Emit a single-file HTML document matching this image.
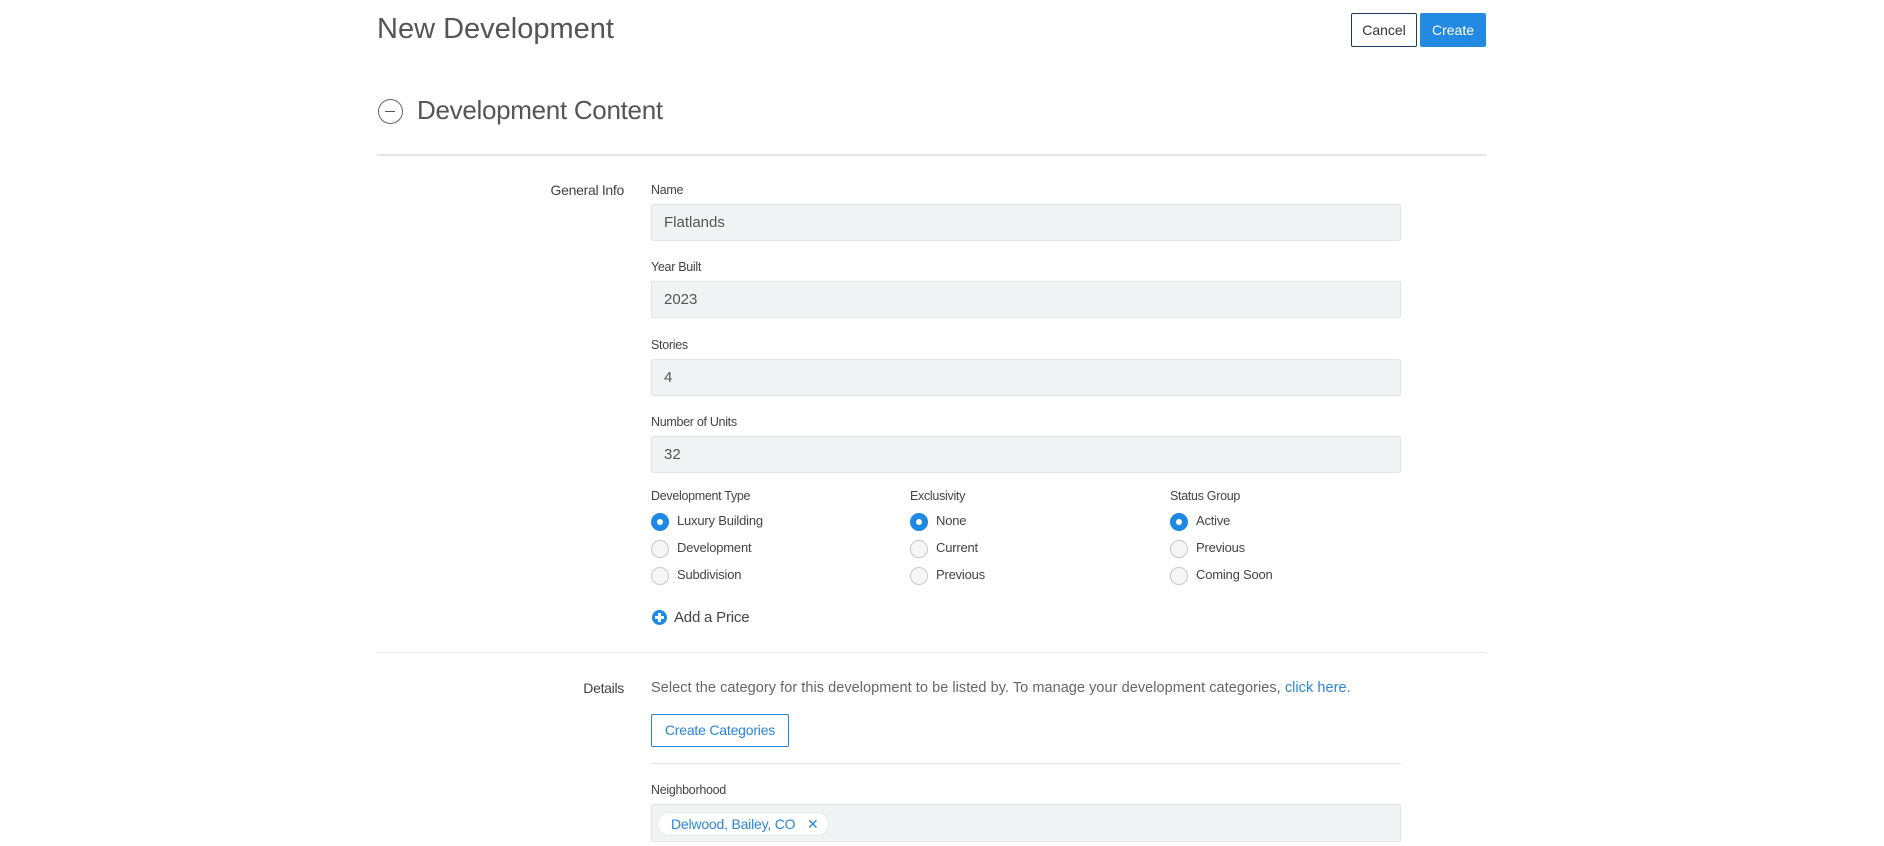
<!DOCTYPE html>
<html><head><style>
*{box-sizing:border-box;margin:0;padding:0}
body{width:1884px;height:846px;background:#fff;font-family:"Liberation Sans",sans-serif;color:#555;position:relative;overflow:hidden}
.a{position:absolute;white-space:nowrap}
.lbl{font-size:12.5px;color:#444;letter-spacing:-0.3px}
.inp{position:absolute;left:651px;width:750px;height:37px;background:#f2f3f4;border:1px solid #e3e4e6;border-radius:2px;font-size:15px;color:#555;padding:9px 0 0 12px}
.r{position:absolute;width:18px;height:18px;border-radius:50%;border:1px solid #c8c8c8;background:#f6f6f6}
.r.on{background:#1e88e5;border-color:#1e88e5}
.r.on:after{content:"";position:absolute;left:5px;top:5px;width:6px;height:6px;border-radius:50%;background:#fff}
.rt{font-size:13px;color:#444;letter-spacing:-0.2px}
</style></head><body>
<div class="a" style="left:377px;top:13px;font-size:29px;color:#555">New Development</div>
<div class="a" style="left:1351px;top:13px;width:66px;height:34px;border:1px solid #1f3a5f;border-radius:2px;font-size:14px;color:#333;text-align:center;line-height:32px">Cancel</div>
<div class="a" style="left:1420px;top:13px;width:66px;height:34px;background:#238ae3;border-radius:2px;font-size:14px;color:#fff;text-align:center;line-height:34px">Create</div>
<div class="a" style="left:378px;top:99px;width:25px;height:25px;border:1.5px solid #666;border-radius:50%"><div style="position:absolute;left:6px;top:10.5px;width:10px;height:1.5px;background:#555"></div></div>
<div class="a" style="left:417px;top:95px;font-size:26px;color:#555;letter-spacing:-0.3px">Development Content</div>
<div class="a" style="left:377px;top:154px;width:1109px;height:2px;background:#e6e6e6"></div>
<div class="a" style="left:524px;width:100px;text-align:right;top:182px;font-size:14px;color:#444;letter-spacing:-0.3px">General Info</div>
<div class="a lbl" style="left:651px;top:183px">Name</div>
<div class="inp" style="top:204px">Flatlands</div>
<div class="a lbl" style="left:651px;top:260px">Year Built</div>
<div class="inp" style="top:281px">2023</div>
<div class="a lbl" style="left:651px;top:338px">Stories</div>
<div class="inp" style="top:359px">4</div>
<div class="a lbl" style="left:651px;top:415px">Number of Units</div>
<div class="inp" style="top:436px">32</div>

<div class="a lbl" style="left:651px;top:489px">Development Type</div>
<div class="r on" style="left:651px;top:513px"></div><div class="a rt" style="left:677px;top:513px">Luxury Building</div>
<div class="r" style="left:651px;top:540px"></div><div class="a rt" style="left:677px;top:540px">Development</div>
<div class="r" style="left:651px;top:567px"></div><div class="a rt" style="left:677px;top:567px">Subdivision</div>

<div class="a lbl" style="left:910px;top:489px">Exclusivity</div>
<div class="r on" style="left:910px;top:513px"></div><div class="a rt" style="left:936px;top:513px">None</div>
<div class="r" style="left:910px;top:540px"></div><div class="a rt" style="left:936px;top:540px">Current</div>
<div class="r" style="left:910px;top:567px"></div><div class="a rt" style="left:936px;top:567px">Previous</div>

<div class="a lbl" style="left:1170px;top:489px">Status Group</div>
<div class="r on" style="left:1170px;top:513px"></div><div class="a rt" style="left:1196px;top:513px">Active</div>
<div class="r" style="left:1170px;top:540px"></div><div class="a rt" style="left:1196px;top:540px">Previous</div>
<div class="r" style="left:1170px;top:567px"></div><div class="a rt" style="left:1196px;top:567px">Coming Soon</div>

<div class="a" style="left:652px;top:610px;width:15px;height:15px;border-radius:50%;background:#1e88e5"><div style="position:absolute;left:3px;top:6.3px;width:9px;height:2.4px;background:#fff"></div><div style="position:absolute;left:6.3px;top:3px;width:2.4px;height:9px;background:#fff"></div></div>
<div class="a" style="left:674px;top:609px;font-size:15px;color:#444;letter-spacing:-0.2px">Add a Price</div>

<div class="a" style="left:377px;top:652px;width:1109px;height:1px;background:#e6e6e6"></div>
<div class="a" style="left:524px;width:100px;text-align:right;top:680px;font-size:14px;color:#444;letter-spacing:-0.3px">Details</div>
<div class="a" style="left:651px;top:680px;font-size:14.5px;color:#666;letter-spacing:0.05px">Select the category for this development to be listed by. To manage your development categories, <span style="color:#2a86d8">click here.</span></div>
<div class="a" style="left:651px;top:714px;width:138px;height:33px;border:1px solid #2a86d8;border-radius:2px;color:#2a86d8;font-size:14px;text-align:center;line-height:31px;letter-spacing:-0.2px">Create Categories</div>
<div class="a" style="left:651px;top:763px;width:750px;height:1px;background:#e3e3e3"></div>
<div class="a lbl" style="left:651px;top:783px">Neighborhood</div>
<div class="inp" style="top:804px;height:38px;padding:0">
<div class="a" style="left:5px;top:7px;width:172px;height:24px;border-radius:12px;background:#fff;border:1px solid #e8e8e8;color:#2a86d8;font-size:14px;line-height:22px;padding-left:13px;letter-spacing:-0.2px">Delwood, Bailey, CO <span style="margin-left:8px">✕</span></div>
</div>
</body></html>
